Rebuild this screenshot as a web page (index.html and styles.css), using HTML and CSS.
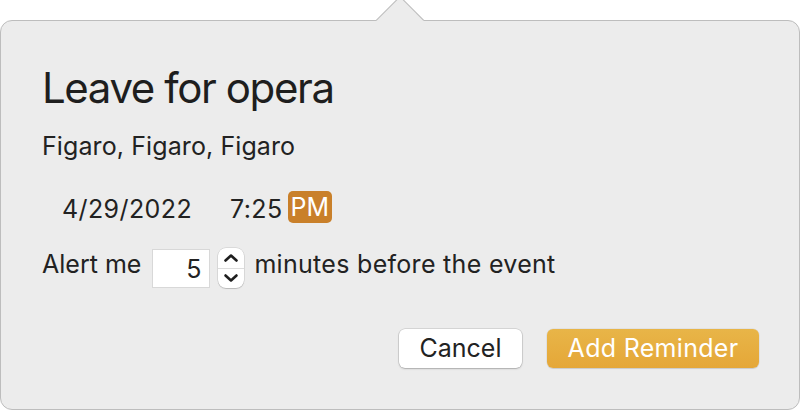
FILE: index.html
```html
<!DOCTYPE html>
<html>
<head>
<meta charset="utf-8">
<link rel="stylesheet" href="styles.css">
</head>
<body>
<div class="popover">
  <div class="panel">
    <h1 class="title">Leave for opera</h1>
    <p class="subtitle">Figaro, Figaro, Figaro</p>
    <div class="datetime">
      <span class="date">4/29/2022</span>
      <span class="time">7:25</span>
      <span class="ampm">PM</span>
    </div>
    <div class="alert">
      <span class="label">Alert me</span>
      <div class="field">5</div>
      <div class="stepper">
        <div class="step up"><svg width="16" height="10" viewBox="0 0 16 10"><path d="M2.5 7.5 L8 2.5 L13.5 7.5" fill="none" stroke="#1e1e1e" stroke-width="2.6" stroke-linecap="round" stroke-linejoin="round"/></svg></div>
        <div class="step down"><svg width="16" height="10" viewBox="0 0 16 10"><path d="M2.5 2.5 L8 7.5 L13.5 2.5" fill="none" stroke="#1e1e1e" stroke-width="2.6" stroke-linecap="round" stroke-linejoin="round"/></svg></div>
      </div>
      <span class="label wide">minutes before the event</span>
    </div>
    <div class="actions">
      <button class="btn cancel">Cancel</button>
      <button class="btn primary">Add Reminder</button>
    </div>
  </div>
</div>
</body>
</html>
```
FILE: styles.css
```css
html, body {
  margin: 0;
  padding: 0;
  background: #ffffff;
}
body {
  width: 800px;
  height: 410px;
  overflow: hidden;
  font-family: "Inter", "Liberation Sans", sans-serif;
  color: #222222;
}
.popover {
  position: relative;
  padding-top: 20px;
}
.popover::before {
  content: "";
  position: absolute;
  left: 383px;
  top: 3px;
  width: 33px;
  height: 33px;
  background: #ececec;
  border-left: 1px solid #bdbdbd;
  border-top: 1px solid #bdbdbd;
  transform: rotate(45deg);
  z-index: 2;
}
.panel {
  box-sizing: border-box;
  width: 800px;
  height: 390px;
  background: #ececec;
  border: 1px solid #bdbdbd;
  border-radius: 12px;
  padding: 42px 40px 0 41px;
  display: flex;
  flex-direction: column;
}
.title {
  margin: 0;
  font-size: 42px;
  font-weight: 400;
  line-height: 50px;
  color: #1e1e1e;
  letter-spacing: -1.4px;
}
.subtitle {
  margin: 18px 0 0 0;
  font-size: 25px;
  line-height: 30px;
  letter-spacing: 0.1px;
}
.datetime {
  margin-top: 33px;
  padding-left: 20px;
  display: flex;
  align-items: center;
  font-size: 25px;
  height: 30px;
  line-height: 30px;
  letter-spacing: 0.4px;
}
.date { margin-right: 38px; }
.time { margin-right: 5px; }
.ampm {
  background: #c9802a;
  color: #ffffff;
  border-radius: 5px;
  padding: 0 3px;
  height: 32px;
  line-height: 32px;
  margin-bottom: 4px;
  letter-spacing: 0;
}
.alert {
  margin-top: 23px;
  display: flex;
  align-items: center;
  font-size: 25px;
  line-height: 30px;
  height: 42px;
}
.label {
  padding-bottom: 9px;
}
.label.wide {
  letter-spacing: 0.3px;
}
.field {
  box-sizing: border-box;
  width: 58px;
  height: 39px;
  margin-left: 11px;
  background: #ffffff;
  border: 1px solid #d8d8d8;
  text-align: right;
  padding-right: 8px;
  line-height: 39px;
  font-size: 25px;
}
.stepper {
  box-sizing: border-box;
  width: 26px;
  height: 40px;
  margin-left: 8px;
  margin-right: 10px;
  background: #ffffff;
  border-radius: 8px;
  box-shadow: 0 0 0 0.5px rgba(0,0,0,0.15), 0 1px 1px rgba(0,0,0,0.15);
  display: flex;
  flex-direction: column;
}
.step {
  flex: 1;
  display: flex;
  align-items: center;
  justify-content: center;
}
.step.up { border-bottom: 1px solid #dddddd; }
.actions {
  margin-top: 40px;
  display: flex;
  justify-content: flex-end;
  gap: 25px;
}
.btn {
  font-family: inherit;
  font-size: 25px;
  height: 39px;
  line-height: 39px;
  border: none;
  border-radius: 6px;
  padding: 0;
}
.cancel {
  width: 123px;
  background: #ffffff;
  color: #222222;
  box-shadow: 0 0 0 0.5px rgba(0,0,0,0.18), 0 1px 2px rgba(0,0,0,0.2);
}
.primary {
  width: 212px;
  color: #ffffff;
  letter-spacing: 0.3px;
  background: linear-gradient(#e8b548, #e5a738);
  box-shadow: 0 0 0 0.5px rgba(0,0,0,0.08), 0 1px 1px rgba(0,0,0,0.1);
}
```
